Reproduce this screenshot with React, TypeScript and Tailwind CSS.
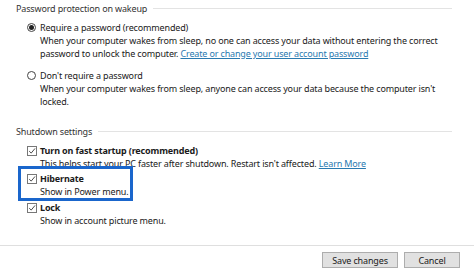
import React from "react";

function Radio({ checked }: { checked?: boolean }) {
  return (
    <span className="flex h-[9px] w-[9px] shrink-0 items-center justify-center rounded-full border border-[#444] bg-white">
      {checked && <span className="h-[5px] w-[5px] rounded-full bg-[#222]" />}
    </span>
  );
}

function Check() {
  return (
    <span className="flex h-[10px] w-[10px] shrink-0 items-center justify-center border border-[#777] bg-white">
      <svg viewBox="0 0 10 10" className="h-[8px] w-[8px]">
        <path d="M1.5 5.2 L4 7.6 L8.8 1.8" fill="none" stroke="#333" strokeWidth="1.1" />
      </svg>
    </span>
  );
}

function GroupTitle({ title }: { title: string }) {
  return (
    <div className="flex items-center gap-[6px] pl-[16px] pr-[22px] text-[#333]">
      <span className="leading-[13px]">{title}</span>
      <span className="h-px flex-1 bg-[#e3e3e3]" />
    </div>
  );
}

export default function App() {
  return (
    <div
      className="flex h-[272px] w-[474px] flex-col overflow-hidden bg-white pt-[2px] text-[9px] tracking-[-0.15px] text-[#1a1a1a]"
      style={{ fontFamily: '"Noto Sans", "Open Sans", sans-serif' }}
    >
      <GroupTitle title="Password protection on wakeup" />

      <div className="mt-[6px] flex flex-col pl-[27px] leading-[13px]">
        <div className="flex items-center gap-[4px]">
          <Radio checked />
          <span>Require a password (recommended)</span>
        </div>
        <div className="whitespace-nowrap pl-[13px]">
          When your computer wakes from sleep, no one can access your data without entering the correct
          <br />
          password to unlock the computer.{" "}
          <span className="text-[#2a7ab0] underline">Create or change your user account password</span>
        </div>

        <div className="mt-[9px] flex items-center gap-[4px]">
          <Radio />
          <span>Don't require a password</span>
        </div>
        <div className="whitespace-nowrap pl-[13px]">
          When your computer wakes from sleep, anyone can access your data because the computer isn't
          <br />
          locked.
        </div>
      </div>

      <div className="mt-[17px]">
        <GroupTitle title="Shutdown settings" />
      </div>

      <div className="mt-[6px] flex flex-col pl-[27px] leading-[13px]">
        <div className="flex items-center gap-[3px]">
          <Check />
          <span className="font-bold">Turn on fast startup (recommended)</span>
        </div>
        <div className="whitespace-nowrap pl-[13px]">
          This helps start your PC faster after shutdown. Restart isn't affected.{" "}
          <span className="text-[#2a7ab0] underline">Learn More</span>
        </div>

        <div className="relative mt-[2px]">
          <div className="absolute left-[-9px] top-[-6px] h-[35px] w-[115px] border-[3px] border-[#1a66cc]" />
          <div className="flex items-center gap-[3px]">
            <Check />
            <span className="font-bold">Hibernate</span>
          </div>
          <div className="pl-[13px]">Show in Power menu.</div>
        </div>

        <div className="mt-[3px] flex items-center gap-[3px]">
          <Check />
          <span className="font-bold">Lock</span>
        </div>
        <div className="pl-[13px]">Show in account picture menu.</div>
      </div>

      <div className="mt-[18px] h-px w-full bg-[#dfdfdf]" />

      <div className="mt-[6px] flex justify-end gap-[6px] pr-[14px]">
        <button className="h-[16px] w-[76px] border border-[#adadad] bg-[#e1e1e1] text-[9px] leading-none">
          Save changes
        </button>
        <button className="h-[16px] w-[56px] border border-[#adadad] bg-[#e1e1e1] text-[9px] leading-none">
          Cancel
        </button>
      </div>
    </div>
  );
}
